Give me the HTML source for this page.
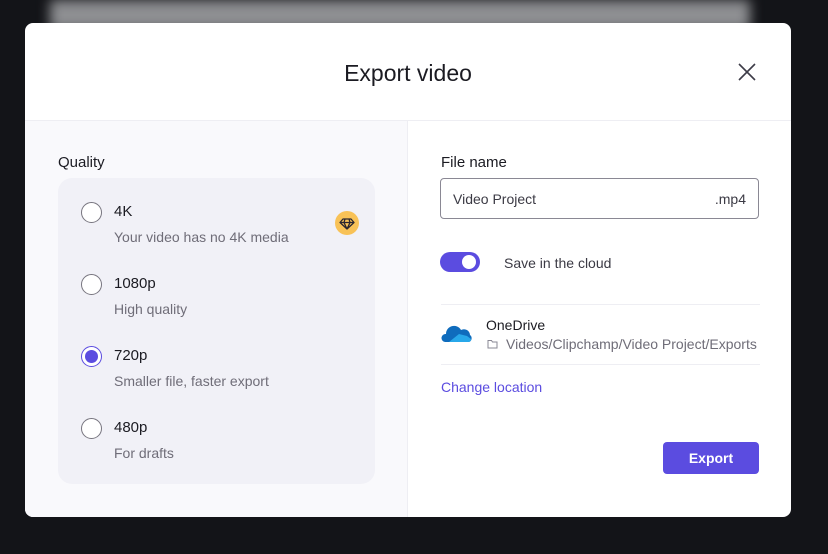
<!DOCTYPE html>
<html><head><style>
*{box-sizing:border-box;margin:0;padding:0}
body{width:828px;height:554px;background:#131418;font-family:"Liberation Sans",sans-serif;position:relative;overflow:hidden}
.topband{position:absolute;left:50px;top:0;width:700px;height:30px;background:#8e8f92;filter:blur(6px)}
.dlg{position:absolute;left:25px;top:23px;width:766px;height:494px;background:#fff;border-radius:8px;overflow:hidden}
.hdr{height:98px;border-bottom:1px solid #eeeef3;position:relative}
.hdr h1{position:absolute;left:0;right:0;top:37px;text-align:center;font-weight:400;font-size:23px;color:#1b1b22}
.x{position:absolute;left:711px;top:38px}
.left{position:absolute;left:0;top:98px;width:382px;height:396px;background:#f9f9fc}
.right{position:absolute;left:382px;top:98px;width:384px;height:396px;border-left:1px solid #eeeef3}
.ql{position:absolute;left:33px;top:33px;font-size:15px;color:#1b1b22}
.card{position:absolute;left:33px;top:57px;width:317px;height:306px;background:#f1f1f7;border-radius:14px}
.opt{position:absolute;left:0;width:317px}
.rad{position:absolute;left:23px;top:0;width:21px;height:21px;border:1.5px solid #77757f;border-radius:50%;background:#fff}
.rad.on{border-color:#5b4ce0;}
.rad.on:after{content:"";position:absolute;left:2.5px;top:2.5px;width:13px;height:13px;border-radius:50%;background:#5b4ce0}
.t{position:absolute;left:56px;top:1px;font-size:15px;color:#1b1b22}
.s{position:absolute;left:56px;top:27px;font-size:14px;color:#6f6d78;white-space:nowrap}
.gem{position:absolute;left:277px;top:9px;width:24px;height:24px;border-radius:50%;background:#f8c257}
.fl{position:absolute;left:33px;top:33px;font-size:15px;color:#1b1b22}
.in{position:absolute;left:32px;top:57px;width:319px;height:41px;border:1px solid #8a8894;border-radius:4px;font-size:14px;color:#3b3a44}
.in span{position:absolute;top:12px}
.tog{position:absolute;left:32px;top:131px;width:40px;height:20px;border-radius:10px;background:#5b4ce0}
.tog:after{content:"";position:absolute;right:4px;top:3px;width:14px;height:14px;border-radius:50%;background:#fff}
.tl{position:absolute;left:96px;top:134px;font-size:14px;color:#3b3a44}
.hl{position:absolute;left:33px;width:319px;height:1px;background:#eeeef3}
.od{position:absolute;left:78px;top:196px;font-size:14px;color:#1b1b22}
.path{position:absolute;left:98px;top:215px;font-size:14px;color:#6f6d78;white-space:nowrap}
.cl{position:absolute;left:33px;top:258px;font-size:14px;color:#5b4ce0}
.btn{position:absolute;left:255px;top:321px;width:96px;height:32px;border-radius:4px;background:#5b4ce0;color:#fff;font-size:14px;font-weight:700;text-align:center;line-height:33px}
</style></head><body>
<div class="topband"></div>
<div class="dlg">
 <div class="hdr"><h1>Export video</h1>
  <svg class="x" width="22" height="22" viewBox="0 0 22 22"><path d="M3 3L19 19M19 3L3 19" stroke="#3d3c48" stroke-width="1.6" fill="none"/></svg>
 </div>
 <div class="left">
  <div class="ql">Quality</div>
  <div class="card">
   <div class="opt" style="top:24px"><div class="rad"></div><div class="t">4K</div><div class="s">Your video has no 4K media</div>
    <div class="gem"><svg width="24" height="24" viewBox="0 0 24 24"><path d="M8 8h8l3 3.5-7 6.5-7-6.5zM5 11.5h14M10 8l-1 3.5 3 6.5 3-6.5-1-3.5" stroke="#2a2630" stroke-width="1.3" fill="none" stroke-linejoin="round"/></svg></div></div>
   <div class="opt" style="top:96px"><div class="rad"></div><div class="t">1080p</div><div class="s">High quality</div></div>
   <div class="opt" style="top:168px"><div class="rad on"></div><div class="t">720p</div><div class="s">Smaller file, faster export</div></div>
   <div class="opt" style="top:240px"><div class="rad"></div><div class="t">480p</div><div class="s">For drafts</div></div>
  </div>
 </div>
 <div class="right">
  <div class="fl">File name</div>
  <div class="in"><span style="left:12px">Video Project</span><span style="right:12px">.mp4</span></div>
  <div class="tog"></div><div class="tl">Save in the cloud</div>
  <div class="hl" style="top:183px"></div>
  <svg style="position:absolute;left:33px;top:201px" width="32" height="22" viewBox="0 0 32 22"><path d="M4 20a4 4 0 0 1 1-8 8 8 0 0 1 15-4 6 6 0 0 1 9 5 4 4 0 0 1-1 7z" fill="#0f6cbd"/><path d="M8 20l10-8 8 2 4 3a3 3 0 0 1-2 3z" fill="#28a8ea"/></svg>
  <div class="od">OneDrive</div>
  <svg style="position:absolute;left:79px;top:218px" width="11" height="10" viewBox="0 0 11 10"><path d="M1 1.5h3.5l1 1.5h4.5v6h-9z" stroke="#8a8894" fill="none"/></svg>
  <div class="path">Videos/Clipchamp/Video Project/Exports</div>
  <div class="hl" style="top:243px"></div>
  <div class="cl">Change location</div>
  <div class="btn">Export</div>
 </div>
</div>
</body></html>
